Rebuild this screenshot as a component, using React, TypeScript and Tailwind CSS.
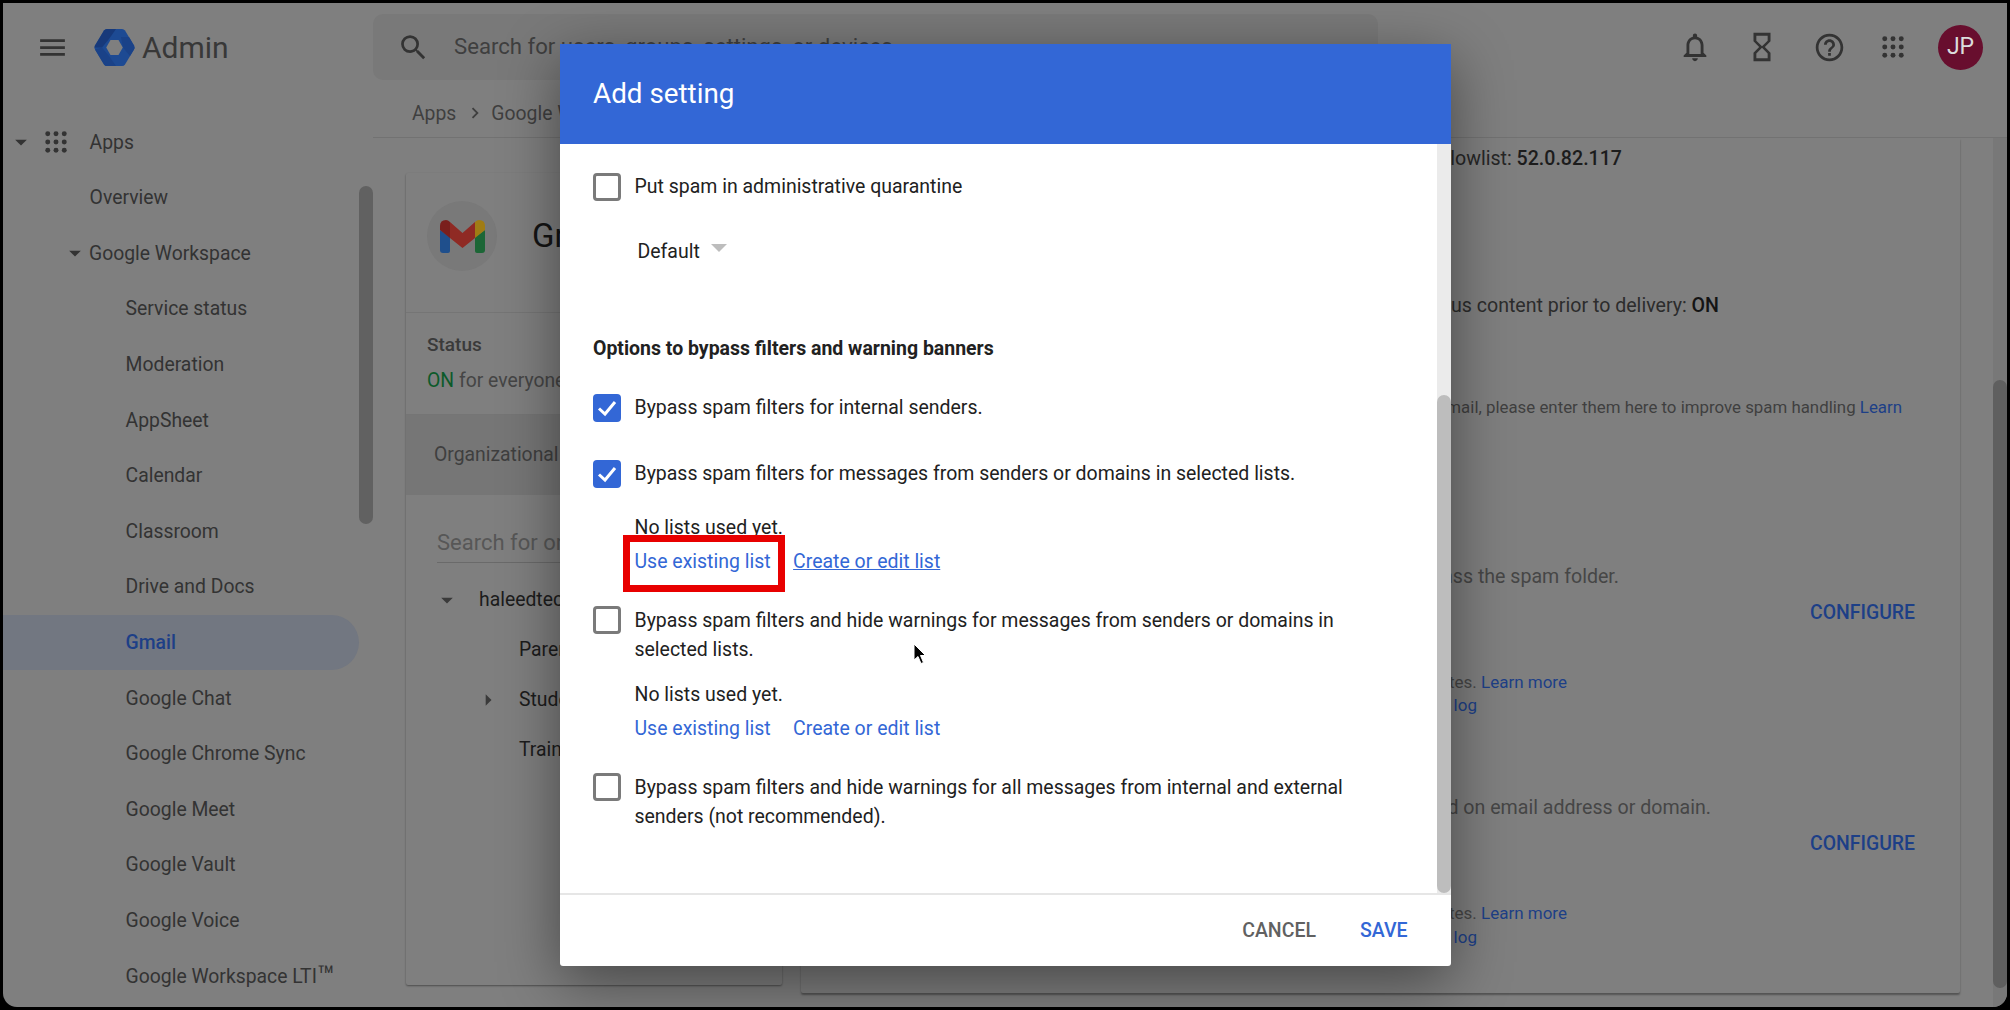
import React from 'react';
import {
  MdMenu, MdSearch, MdNotificationsNone, MdHourglassEmpty, MdHelpOutline,
  MdArrowDropDown, MdArrowRight, MdChevronRight,
} from 'react-icons/md';

function Dots({ className }: { className?: string }) {
  const pts = [3, 12, 21];
  return (
    <svg viewBox="0 0 24 24" className={className} fill="currentColor">
      {pts.map((y) => pts.map((x) => <circle key={`${x}-${y}`} cx={x} cy={y} r="2.7" />))}
    </svg>
  );
}

function AdminLogo() {
  return (
    <svg viewBox="0 0 41 37" className="h-[37px] w-[41px]">
      <path d="M10 1.5 Q11 0 13 0 H28 Q30 0 31 1.5 L40 16.5 Q41 18.5 40 20.5 L31 35.5 Q30 37 28 37 H13 Q11 37 10 35.5 L1 20.5 Q0 18.5 1 16.5 Z" fill="#1d4a93" />
      <path d="M10 1.5 Q11 0 13 0 H22 L15 10 L8 18.5 H0.5 Q0.5 17.5 1 16.5 Z" fill="#17397a" />
      <path d="M8 18.5 L15 27 L22 37 H13 Q11 37 10 35.5 L1 20.5 Z" fill="#1a4288" />
      <path d="M27 8 L35 8 L40 16.5 Q41 18.5 40 20.5 L36 27 L29 18.5 Z" fill="#1a4288" />
      <path d="M16.5 11 H24.5 L28.8 18.5 L24.5 26 H16.5 L12.2 18.5 Z" fill="#7f7f7f" />
    </svg>
  );
}

function GmailLogo() {
  return (
    <svg viewBox="0 0 45 33" className="h-[33px] w-[45px]">
      <path d="M0 10 V30 Q0 33 3 33 H8 Q10 33 10 31 V17 Z" fill="#1f4f8c" />
      <path d="M35 17 V31 Q35 33 37 33 H42 Q45 33 45 30 V10 Z" fill="#1c6636" />
      <path d="M0 6 Q0 0 6 0 Q8 0 10 2 V18 L0 10 Z" fill="#7a1f1c" />
      <path d="M10 2 L22.5 13 L35 2 V18 L22.5 28 L10 18 Z" fill="#8f2a24" />
      <path d="M35 2 Q37 0 39 0 Q45 0 45 6 V10 L35 18 Z" fill="#a07c14" />
    </svg>
  );
}

function Check({ on }: { on?: boolean }) {
  return on ? (
    <span className="flex h-[28px] w-[28px] shrink-0 items-center justify-center rounded-[4px] bg-[#3367d6]">
      <svg viewBox="0 0 24 24" className="h-[24px] w-[24px]" fill="none" stroke="#ffffff" strokeWidth="3">
        <path d="M4 12.5 L10 18 L20 6" />
      </svg>
    </span>
  ) : (
    <span className="h-[28px] w-[28px] shrink-0 rounded-[4px] border-[3px] border-[#7a7a7a] bg-white" />
  );
}

const sub = ['Service status', 'Moderation', 'AppSheet', 'Calendar', 'Classroom', 'Drive and Docs'];
const sub2 = ['Google Chat', 'Google Chrome Sync', 'Google Meet', 'Google Vault', 'Google Voice'];

function NavRow({ children }: { children: React.ReactNode }) {
  return <div className="flex h-[55.6px] items-center pl-[122.6px] text-[19.35px] text-[#333333]">{children}</div>;
}

function Sidebar() {
  return (
    <aside className="flex w-[370px] shrink-0 flex-col">
      <div className="flex h-[111.4px] shrink-0 items-start pt-[28px] pl-[33px] text-[#333333]">
        <MdMenu size={33} />
        <span className="ml-[25px] mt-[-2px]"><AdminLogo /></span>
        <span className="ml-[7px] mt-[-3px] text-[30px] leading-[40px] text-[#383838]">Admin</span>
      </div>
      <div className="flex min-h-0 flex-1">
        <nav className="w-[356px] shrink-0">
          <div className="flex h-[55.6px] items-center pl-[4px] text-[19.35px] text-[#333333]">
            <MdArrowDropDown size={28} className="text-[#333333]" />
            <Dots className="ml-[9.6px] h-[22px] w-[22px] text-[#333333]" />
            <span className="ml-[23px]">Apps</span>
          </div>
          <div className="flex h-[55.6px] items-center pl-[86.6px] text-[19.35px] text-[#333333]">Overview</div>
          <div className="flex h-[55.6px] items-center pl-[58px] text-[19.35px] text-[#333333]">
            <MdArrowDropDown size={28} />
            <span>Google Workspace</span>
          </div>
          {sub.map((s) => <NavRow key={s}>{s}</NavRow>)}
          <div className="flex h-[55.6px] items-center rounded-r-full bg-[#727781] pl-[122.6px] text-[19.35px] font-medium text-[#1d3f87]">Gmail</div>
          {sub2.map((s) => <NavRow key={s}>{s}</NavRow>)}
          <NavRow>Google Workspace LTI<span className="text-[29px] leading-none">™</span></NavRow>
        </nav>
        <div className="w-[14px] shrink-0">
          <div className="mt-[72px] h-[338px] rounded-full bg-[#616161]" />
        </div>
      </div>
    </aside>
  );
}

function TopBar() {
  return (
    <div className="flex h-[86px] shrink-0 items-start pt-[11px]">
      <div className="flex h-[66px] w-[1005px] items-center rounded-[10px] bg-[#797979] pl-[24px] text-[#333333]">
        <MdSearch size={33} />
        <span className="ml-[24px] whitespace-nowrap text-[22.15px] text-[#3f3f3f]">Search for users, groups, settings, or devices</span>
      </div>
      <div className="flex h-[66px] flex-1 items-center text-[#333333]">
        <MdNotificationsNone size={34} className="ml-[300px]" />
        <MdHourglassEmpty size={34} className="ml-[33px]" />
        <MdHelpOutline size={33} className="ml-[34px]" />
        <Dots className="ml-[36px] h-[22px] w-[22px]" />
        <span className="ml-[34px] flex h-[45px] w-[45px] items-center justify-center rounded-full bg-[#680e2e] text-[23px] text-[#dcdcdc]">JP</span>
      </div>
    </div>
  );
}

function Breadcrumb() {
  return (
    <div className="flex h-[49px] shrink-0 items-center border-b border-[#727272] pl-[39px] text-[19.35px] text-[#3f3f3f]">
      <span className="mt-[2px]">Apps</span>
      <MdChevronRight size={22} className="ml-[8px] mr-[5px]" />
      <span className="mt-[2px]">Google Workspace</span>
    </div>
  );
}

function TreeRow({ children, className }: { children: React.ReactNode; className: string }) {
  return <div className={`flex h-[50px] items-center text-[19.35px] text-[#1c1c1c] ${className}`}>{children}</div>;
}

function LeftCard() {
  return (
    <section className="mt-[35px] ml-[33px] h-[812px] w-[376px] shrink-0 overflow-hidden rounded-[2px] shadow-[0_1px_2px_rgba(0,0,0,0.4)]">
      <div className="flex h-[139px] items-start pl-[21px] pt-[28px]">
        <span className="flex h-[70px] w-[70px] items-center justify-center rounded-full bg-[#797979]"><GmailLogo /></span>
        <span className="ml-[35px] mt-[15px] text-[33px] leading-[40px] text-[#141414]">Gmail</span>
      </div>
      <div className="h-[103px] border-y border-[#757575] pl-[21px]">
        <p className="mt-[19px] text-[19px] leading-[26px] font-medium text-[#3a3a3a]">Status</p>
        <p className="mt-[10px] text-[19.35px] leading-[26px] whitespace-nowrap text-[#454545]"><span className="text-[#0c5a2a]">ON</span> for everyone</p>
      </div>
      <div className="flex h-[80px] items-center bg-[#767676] pl-[28px] text-[19.35px] whitespace-nowrap text-[#3f3f3f]">Organizational Units</div>
      <div className="ml-[31px] mt-[32px] h-[36px] border-b border-[#6a6a6a] text-[22px] leading-[32px] whitespace-nowrap text-[#575757]">Search for organizational units</div>
      <TreeRow className="mt-[12px] pl-[27px]">
        <MdArrowDropDown size={28} className="text-[#3a3a3a]" />
        <span className="ml-[18px]">haleedtech.com</span>
      </TreeRow>
      <TreeRow className="pl-[113px]">Parents</TreeRow>
      <TreeRow className="pl-[68px]">
        <MdArrowRight size={28} className="text-[#3a3a3a]" />
        <span className="ml-[17px]">Students</span>
      </TreeRow>
      <TreeRow className="pl-[113px]">Training</TreeRow>
    </section>
  );
}

function RightCard() {
  return (
    <section className="ml-[19px] flex h-[855px] w-[1159px] shrink-0 flex-col items-end overflow-hidden rounded-b-[2px] pt-[7px] whitespace-nowrap shadow-[0_2px_2px_rgba(0,0,0,0.35)]">
      <p className="mr-[338px] text-[19.6px] leading-[28px] text-[#262626]">Allowlist: <span className="font-medium text-[#1c1c1c]">52.0.82.117</span></p>
      <p className="mr-[241px] mt-[119px] text-[19.6px] leading-[28px] text-[#2c2c2c]">Various content prior to delivery: <span className="font-medium text-[#141414]">ON</span></p>
      <p className="mr-[58px] mt-[75px] text-[16.85px] leading-[24px] text-[#3f3f3f]">email, please enter them here to improve spam handling <span className="text-[#1d3f87]">Learn</span></p>
      <p className="mr-[341px] mt-[144px] text-[19.6px] leading-[28px] text-[#464646]">bypass the spam folder.</p>
      <p className="mr-[45px] mt-[8px] text-[19.4px] leading-[28px] font-medium text-[#1d3f87]">CONFIGURE</p>
      <p className="mr-[393px] mt-[44px] text-[17px] leading-[22px] text-[#464646]">sites. <span className="text-[#1d3f87]">Learn more</span></p>
      <p className="mr-[483px] mt-[1px] text-[17px] leading-[22px] text-[#1d3f87]">audit log</p>
      <p className="mr-[249px] mt-[78px] text-[19.6px] leading-[28px] text-[#464646]">based on email address or domain.</p>
      <p className="mr-[45px] mt-[8px] text-[19.4px] leading-[28px] font-medium text-[#1d3f87]">CONFIGURE</p>
      <p className="mr-[393px] mt-[44px] text-[17px] leading-[22px] text-[#464646]">sites. <span className="text-[#1d3f87]">Learn more</span></p>
      <p className="mr-[483px] mt-[2px] text-[17px] leading-[22px] text-[#1d3f87]">audit log</p>
    </section>
  );
}

function LinkRow({ mark }: { mark?: boolean }) {
  return (
    <div className="relative ml-[41.5px] mt-[6px] flex h-[28px] items-center gap-[22.5px] text-[#3367d6]">
      {mark && <span className="absolute left-[-11.5px] top-[-13px] h-[57px] w-[162px] border-[7px] border-[#e80000]" />}
      <span>Use existing list</span>
      <span className={mark ? 'underline' : ''}>Create or edit list</span>
    </div>
  );
}

function Dialog() {
  return (
    <div className="absolute left-[560px] top-[44px] flex h-[922px] w-[890.5px] flex-col rounded-b-[3px] bg-white shadow-[0_16px_60px_rgba(0,0,0,0.45)]">
      <header className="flex h-[100px] shrink-0 items-center bg-[#3367d6] pl-[33px] text-[27.8px] text-white">Add setting</header>
      <div className="flex min-h-0 flex-1 bg-white">
        <div className="flex-1 overflow-hidden pl-[33px] pt-[29px] text-[19.48px] leading-[28px] text-[#212121]">
          <label className="flex items-center gap-[13.5px]"><Check /><span>Put spam in administrative quarantine</span></label>
          <div className="ml-[44.5px] mt-[37px] flex items-center gap-[11px]">
            <span>Default</span>
            <span className="mt-[-8px] h-0 w-0 border-x-[8px] border-t-[8px] border-x-transparent border-t-[#bdbdbd]" />
          </div>
          <h3 className="mt-[69px] font-bold">Options to bypass filters and warning banners</h3>
          <label className="mt-[31px] flex items-center gap-[13.5px]"><Check on /><span>Bypass spam filters for internal senders.</span></label>
          <label className="mt-[38px] flex items-center gap-[13.5px]"><Check on /><span>Bypass spam filters for messages from senders or domains in selected lists.</span></label>
          <p className="ml-[41.5px] mt-[26px]">No lists used yet.</p>
          <LinkRow mark />
          <label className="mt-[30px] flex items-start gap-[13.5px] leading-[29px]"><Check /><span className="w-[730px]">Bypass spam filters and hide warnings for messages from senders or domains in selected lists.</span></label>
          <p className="ml-[41.5px] mt-[17px]">No lists used yet.</p>
          <LinkRow />
          <label className="mt-[30px] flex items-start gap-[13.5px] leading-[29px]"><Check /><span className="w-[730px]">Bypass spam filters and hide warnings for all messages from internal and external senders (not recommended).</span></label>
        </div>
        <div className="w-[13.5px] shrink-0 bg-[#ebebeb]">
          <div className="mt-[251px] h-[498px] rounded-full bg-[#bdbdbd]" />
        </div>
      </div>
      <footer className="flex h-[73px] shrink-0 items-center justify-end border-t-2 border-[#e6e6e6] pr-[43px] text-[19.5px] font-medium">
        <span className="text-[#616161]">CANCEL</span>
        <span className="ml-[44px] text-[#3367d6]">SAVE</span>
      </footer>
    </div>
  );
}

export default function App() {
  return (
    <div className="relative h-[1010px] w-[2010px] overflow-hidden bg-black p-[3px] font-[Roboto,sans-serif]">
      <div className="flex h-[1004px] w-[2004px] overflow-hidden rounded-b-[14px] bg-[#7f7f7f]">
        <Sidebar />
        <div className="flex min-w-0 flex-1 flex-col">
          <TopBar />
          <Breadcrumb />
          <div className="flex min-h-0 flex-1">
            <LeftCard />
            <RightCard />
            <div className="ml-[33px] w-[14px] shrink-0 bg-[#787878]">
              <div className="mt-[242px] h-[608px] rounded-full bg-[#5f5f5f]" />
            </div>
          </div>
        </div>
      </div>
      <Dialog />
      <svg viewBox="0 0 14 22" className="absolute left-[913px] top-[643px] h-[22px] w-[14px]">
        <path d="M1 1 V17 L5 13.5 L8 20.5 L10.5 19.5 L7.5 12.5 H12.5 Z" fill="#000000" stroke="#ffffff" strokeWidth="1" />
      </svg>
    </div>
  );
}
